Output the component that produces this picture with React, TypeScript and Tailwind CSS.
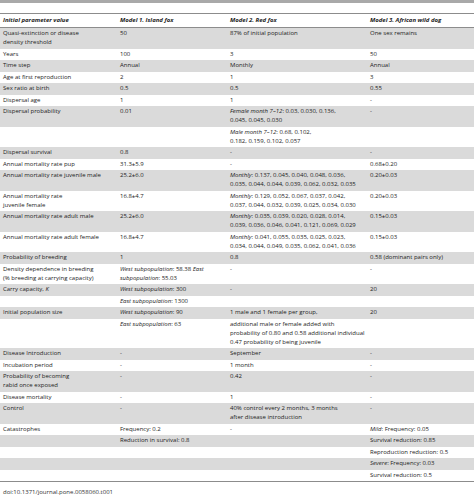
import type { ReactNode } from "react"

type Row = [ReactNode, ReactNode, ReactNode, ReactNode]

const I = ({ children }: { children: ReactNode }) => <span className="italic">{children}</span>

const rows: Row[] = [
  [<>Quasi-extinction or disease<br />density threshold</>, "50", "87% of initial population", "One sex remains"],
  ["Years", "100", "3", "50"],
  ["Time step", "Annual", "Monthly", "Annual"],
  ["Age at first reproduction", "2", "1", "3"],
  ["Sex ratio at birth", "0.5", "0.5", "0.55"],
  ["Dispersal age", "1", "1", "-"],
  ["Dispersal probability", "0.01", <><I>Female month 7–12</I>: 0.03, 0.030, 0.136,<br />0.045, 0.045, 0.030</>, "-"],
  ["", "", <><I>Male month 7–12</I>: 0.68, 0.102,<br />0.182, 0.159, 0.102, 0.057</>, ""],
  ["Dispersal survival", "0.8", "-", "-"],
  ["Annual mortality rate pup", "31.3±5.9", "-", "0.68±0.20"],
  ["Annual mortality rate juvenile male", "25.2±6.0", <><I>Monthly</I>: 0.137, 0.045, 0.040, 0.048, 0.036,<br />0.035, 0.044, 0.044, 0.039, 0.062, 0.032, 0.035</>, "0.20±0.03"],
  [<>Annual mortality rate<br />juvenile female</>, "16.8±4.7", <><I>Monthly</I>: 0.129, 0.052, 0.067, 0.037, 0.042,<br />0.037, 0.044, 0.032, 0.039, 0.025, 0.034, 0.030</>, "0.20±0.03"],
  ["Annual mortality rate adult male", "25.2±6.0", <><I>Monthly</I>: 0.035, 0.039, 0.020, 0.028, 0.014,<br />0.039, 0.036, 0.046, 0.041, 0.121, 0.069, 0.029</>, "0.15±0.03"],
  ["Annual mortality rate adult female", "16.8±4.7", <><I>Monthly</I>: 0.041, 0.055, 0.035, 0.025, 0.023,<br />0.034, 0.044, 0.049, 0.035, 0.062, 0.041, 0.036</>, "0.15±0.03"],
  ["Probability of breeding", "1", "0.8", "0.58 (dominant pairs only)"],
  [<>Density dependence in breeding<br />(% breeding at carrying capacity)</>, <><I>West subpopulation</I>: 58.38 <I>East</I><br /><I>subpopulation</I>: 55.03</>, "-", "-"],
  [<>Carry capacity, <I>K</I></>, <><I>West subpopulation</I>: 300</>, "-", "20"],
  ["", <><I>East subpopulation</I>: 1300</>, "", ""],
  ["Initial population size", <><I>West subpopulation</I>: 90</>, "1 male and 1 female per group,", "20"],
  ["", <><I>East subpopulation</I>: 63</>, <>additional male or female added with<br />probability of 0.80 and 0.58 additional individual<br />0.47 probability of being juvenile</>, ""],
  ["Disease Introduction", "-", "September", "-"],
  ["Incubation period", "-", "1 month", "-"],
  [<>Probability of becoming<br />rabid once exposed</>, "-", "0.42", "-"],
  ["Disease mortality", "-", "1", "-"],
  ["Control", "-", <>40% control every 2 months, 3 months<br />after disease introduction</>, "-"],
  ["Catastrophes", "Frequency: 0.2", "-", <><I>Mild</I>: Frequency: 0.05</>],
  ["", "Reduction in survival: 0.8", "", "Survival reduction: 0.85"],
  ["", "", "", "Reproduction reduction: 0.5"],
  ["", "", "", <><I>Severe</I>: Frequency: 0.03</>],
  ["", "", "", "Survival reduction: 0.5"],
]

const cols = "grid grid-cols-[120px_110px_140px_1fr]"

export default function App() {
  return (
    <div className="w-[474px] h-[500px] bg-white text-[#1c1c1c] text-[6px] leading-[9px] overflow-hidden" style={{ fontFamily: '"Open Sans", "Liberation Sans", sans-serif' }}>
      <div className="h-[3px] bg-[#a9a9a9]" />
      <div className="h-[10px]" />
      <div className="border-t border-[#8c8c8c]" />
      <div className={`${cols} py-[2px] font-bold italic border-b border-[#8c8c8c]`}>
        <div className="pl-[3px]">Initial parameter value</div>
        <div>Model 1. Island fox</div>
        <div>Model 2. Red fox</div>
        <div>Model 3. African wild dog</div>
      </div>
      {rows.map((r, i) => (
        <div key={i} className={`${cols} py-[1.25px] whitespace-nowrap ${i % 2 === 0 ? "bg-[#dadada]" : "bg-white"}`}>
          <div className="pl-[3px]">{r[0]}</div>
          <div>{r[1]}</div>
          <div>{r[2]}</div>
          <div>{r[3]}</div>
        </div>
      ))}
      <div className="border-t border-[#8c8c8c]" />
      <div className="pl-[3px] pt-[6px] text-[#333]">doi:10.1371/journal.pone.0058060.t001</div>
    </div>
  )
}
